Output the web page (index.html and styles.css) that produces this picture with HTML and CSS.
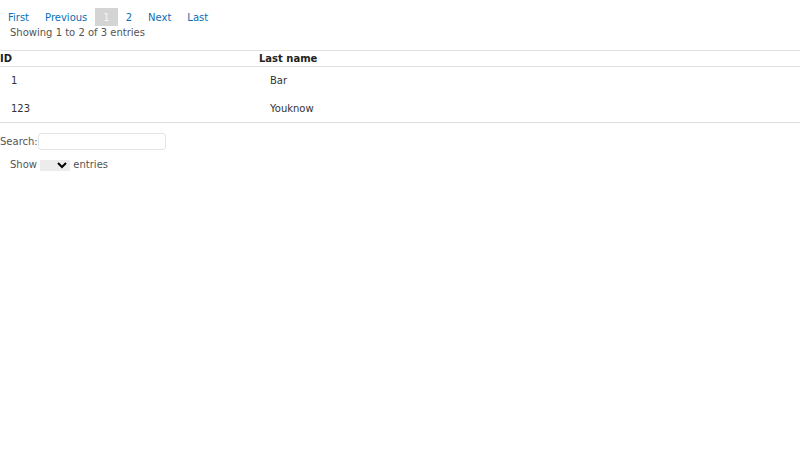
FILE: index.html
```html
<!DOCTYPE html>
<html lang="en">
<head>
    <meta charset="UTF-8">
    <title>Entries</title>
    <link rel="stylesheet" href="styles.css">
</head>
<body>
    <div class="pager">
        <a href="#">First</a>
        <a href="#">Previous</a>
        <span class="current">1</span>
        <a href="#">2</a>
        <a href="#">Next</a>
        <a href="#">Last</a>
    </div>
    <div class="info">Showing 1 to 2 of 3 entries</div>

    <table class="grid">
        <thead>
            <tr><th class="col-id">ID</th><th>Last name</th></tr>
        </thead>
        <tbody>
            <tr><td>1</td><td>Bar</td></tr>
            <tr><td>123</td><td>Youknow</td></tr>
        </tbody>
    </table>

    <div class="search">
        <label>Search:</label><input type="text">
    </div>
    <div class="length">
        Show <select></select> entries
    </div>
</body>
</html>
```

FILE: styles.css
```css
/* simple data table */
body {
    margin: 0;
    font-family: 'DejaVu Sans', sans-serif;
    font-size: 10px;
    color: #333;
    background: #fff;
}

.pager {
    display: flex;
    align-items: center;
    padding-top: 8px;
    height: 18px;
}

.pager a,
.pager span {
    padding: 1px 8px 0;
    line-height: 17px;
    color: #0a6eb4;
    text-decoration: none;
}

.pager .current {
    background: #d4d4d4;
    color: #f4f4f4;
}

.info {
    padding: 0 10px;
    line-height: 13px;
    color: #555;
}

.grid {
    width: 100%;
    border-collapse: collapse;
    margin-top: 11px;
    border-top: 1px solid #e2e2e2;
    border-bottom: 1px solid #ddd;
}

.grid th {
    text-align: left;
    font-weight: bold;
    color: #222;
    padding: 1px 0;
    line-height: 13px;
    border-bottom: 1px solid #e2e2e2;
}

.grid .col-id { width: 259px; }

.grid td {
    padding: 7px 11px 6.5px;
    line-height: 14px;
    color: #333;
}

.search {
    display: flex;
    align-items: center;
    margin-top: 10px;
    color: #555;
}

.search input {
    width: 124px;
    height: 13px;
    padding: 1px;
    border: 1px solid #e4e4e4;
    border-radius: 3px;
    font-size: 10px;
}

.length {
    padding: 9px 10px;
    color: #555;
}

.length select {
    width: 30px;
    height: 11px;
    border: none;
    background: #ececec;
    font-size: 9px;
    vertical-align: middle;
}
```
